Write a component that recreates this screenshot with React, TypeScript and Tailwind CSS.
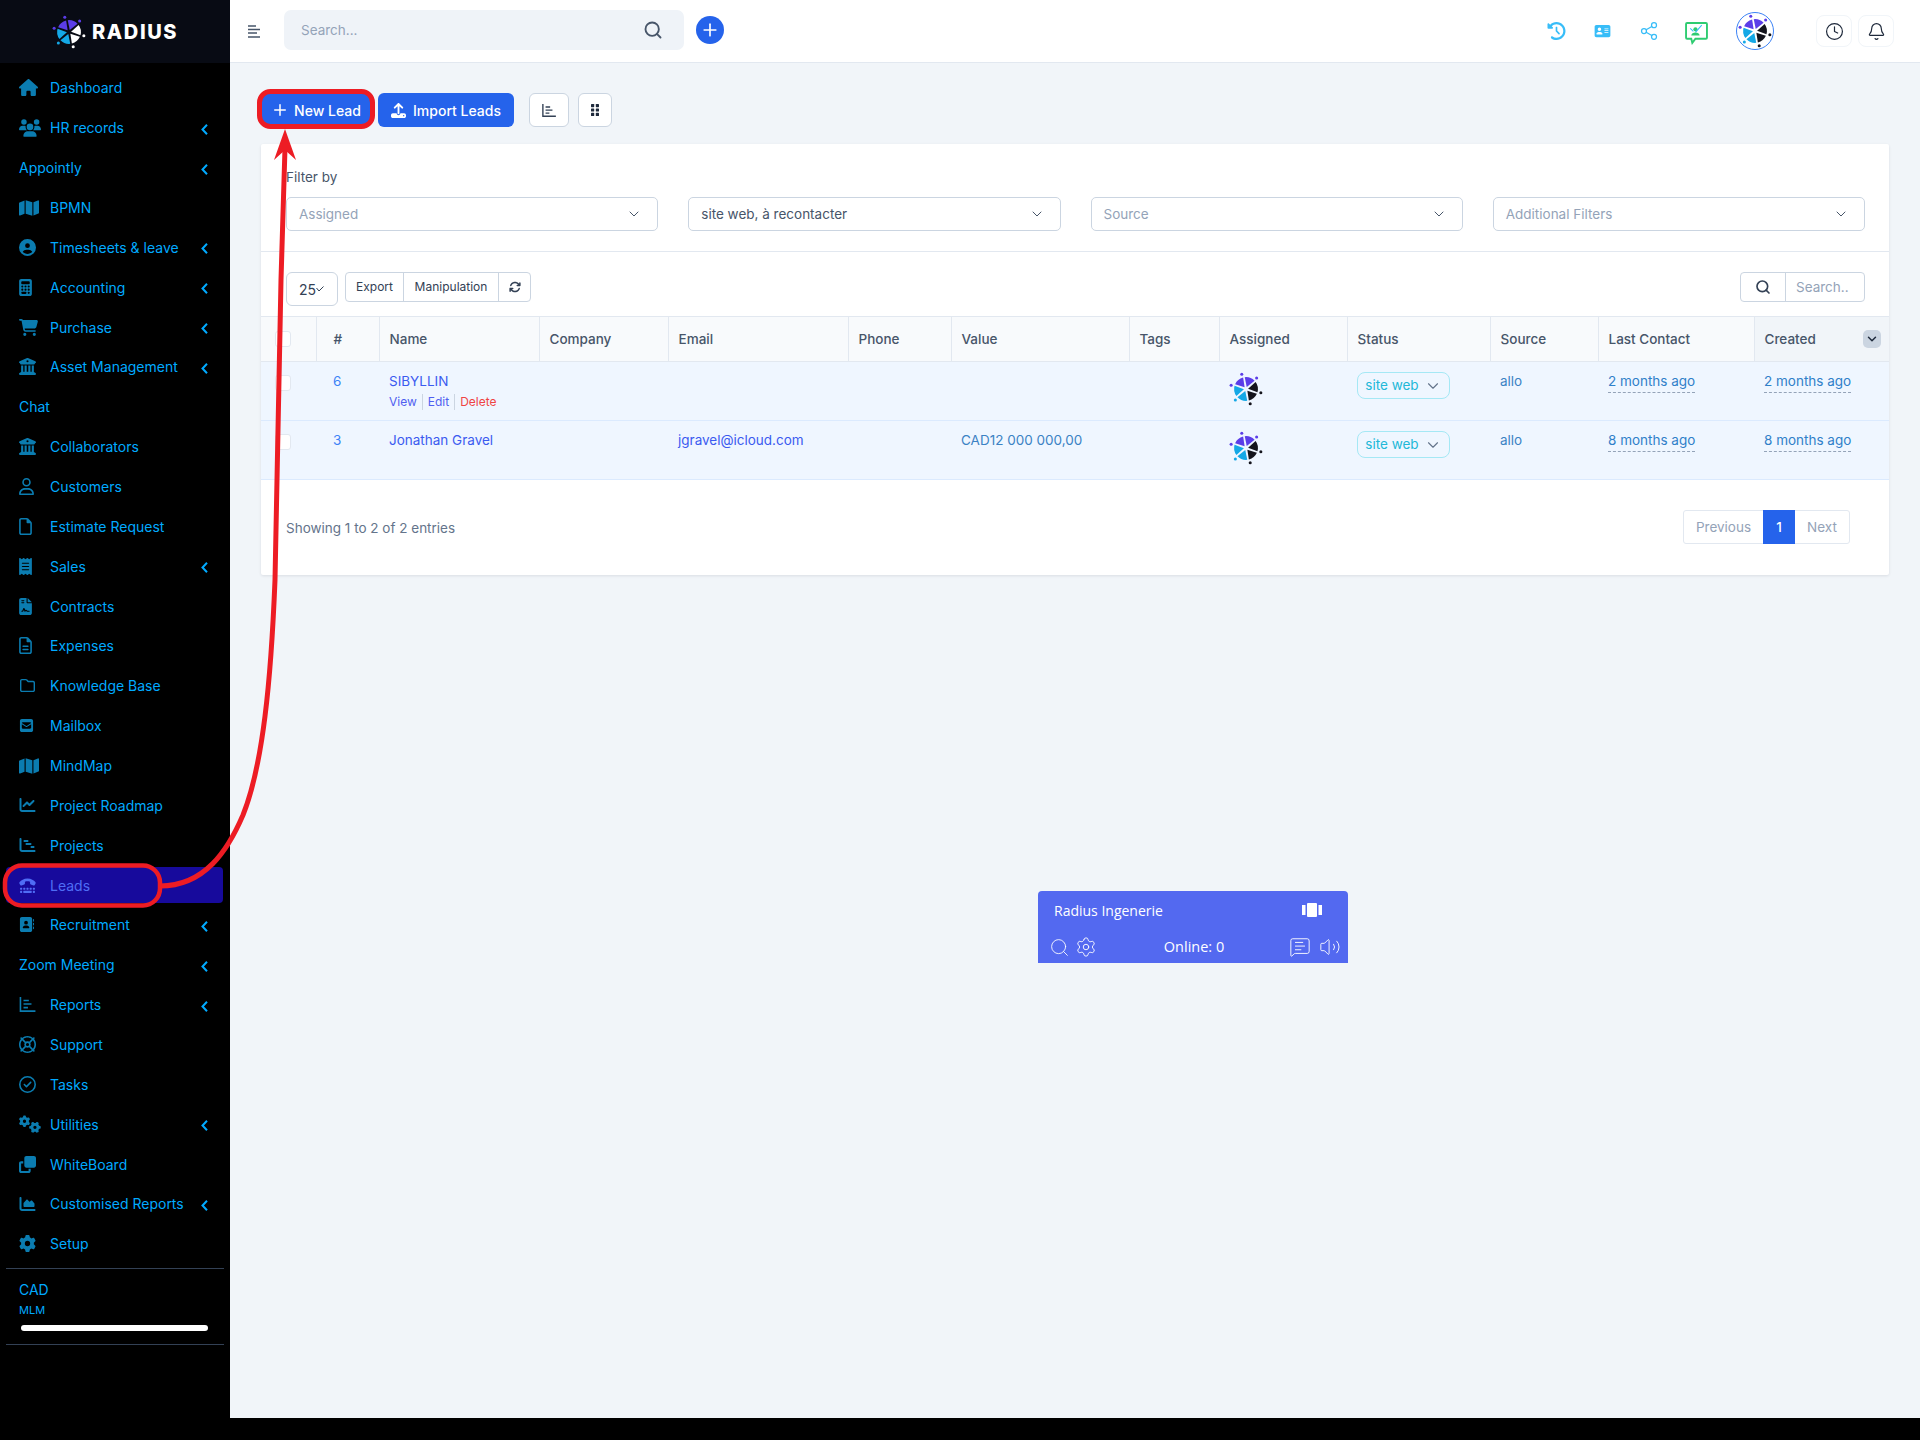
import React from "react";
import { ChevronDown, Search, Plus, Share2, Clock, Bell, Settings, MessageSquareText, Volume2 } from "lucide-react";
import {
  FaHouse, FaUsers, FaMap, FaCircleUser, FaCalculator, FaCartShopping, FaBuildingColumns, FaRegUser, FaRegFile,
  FaReceipt, FaFileContract, FaRegFileLines, FaRegFolder, FaSquareEnvelope, FaChartLine, FaChartGantt, FaTty,
  FaAddressBook, FaRegLifeRing, FaRegCircleCheck, FaGears, FaClone, FaChartArea, FaGear, FaClockRotateLeft,
  FaAddressCard, FaArrowsRotate, FaUpload,
} from "react-icons/fa6";

function ReportsIcon({ className }: { className?: string }) {
  return (
    <svg viewBox="0 0 18 17" className={className} fill="none" stroke="currentColor" strokeWidth="1.8">
      <path d="M1 0v16h17" />
      <path d="M4.5 4h6M4.5 8h9M4.5 12h5" />
    </svg>
  );
}

function Wheel({ size, right }: { size: number; right: string }) {
  const purple = "#5b3de8";
  const cyan = "#14a8e6";
  const colors = [purple, purple, right, right, cyan, cyan];
  const dots = [purple, purple, right, right, cyan, purple];
  const wedge = (a: number) => {
    const r = (d: number) => (d * Math.PI) / 180;
    const x1 = 2.5 * Math.cos(r(a));
    const y1 = 2.5 * Math.sin(r(a));
    const x2 = 14 * Math.cos(r(a - 26));
    const y2 = 14 * Math.sin(r(a - 26));
    const x3 = 14 * Math.cos(r(a + 26));
    const y3 = 14 * Math.sin(r(a + 26));
    return `M${x1} ${y1}L${x2} ${y2}A14 14 0 0 1 ${x3} ${y3}Z`;
  };
  return (
    <svg viewBox="-20 -20 40 40" width={size} height={size}>
      {colors.map((c, i) => (
        <path key={i} d={wedge(-130 + i * 60)} fill={c} />
      ))}
      {dots.map((c, i) => {
        const a = ((-106 + i * 60) * Math.PI) / 180;
        return <circle key={i} cx={18 * Math.cos(a)} cy={18 * Math.sin(a)} r="1.8" fill={c} />;
      })}
    </svg>
  );
}

const menu: { label: string; icon?: React.ComponentType<{ className?: string }>; size?: string; arrow?: boolean; active?: boolean }[] = [
  { label: "Dashboard", icon: FaHouse, size: "w-[19px] h-[17px]" },
  { label: "HR records", icon: FaUsers, size: "w-[22px] h-[18px]", arrow: true },
  { label: "Appointly", arrow: true },
  { label: "BPMN", icon: FaMap, size: "w-[20px] h-[18px]" },
  { label: "Timesheets & leave", icon: FaCircleUser, size: "w-[17px] h-[17px]", arrow: true },
  { label: "Accounting", icon: FaCalculator, size: "w-[13px] h-[17px]", arrow: true },
  { label: "Purchase", icon: FaCartShopping, size: "w-[19px] h-[17px]", arrow: true },
  { label: "Asset Management", icon: FaBuildingColumns, size: "w-[17px] h-[17px]", arrow: true },
  { label: "Chat" },
  { label: "Collaborators", icon: FaBuildingColumns, size: "w-[17px] h-[17px]" },
  { label: "Customers", icon: FaRegUser, size: "w-[15px] h-[17px]" },
  { label: "Estimate Request", icon: FaRegFile, size: "w-[13px] h-[17px]" },
  { label: "Sales", icon: FaReceipt, size: "w-[13px] h-[17px]", arrow: true },
  { label: "Contracts", icon: FaFileContract, size: "w-[13px] h-[17px]" },
  { label: "Expenses", icon: FaRegFileLines, size: "w-[13px] h-[17px]" },
  { label: "Knowledge Base", icon: FaRegFolder, size: "w-[17px] h-[15px]" },
  { label: "Mailbox", icon: FaSquareEnvelope, size: "w-[15px] h-[15px]" },
  { label: "MindMap", icon: FaMap, size: "w-[20px] h-[18px]" },
  { label: "Project Roadmap", icon: FaChartLine, size: "w-[17px] h-[16px]" },
  { label: "Projects", icon: FaChartGantt, size: "w-[17px] h-[16px]" },
  { label: "Leads", icon: FaTty, size: "w-[17px] h-[17px]", active: true },
  { label: "Recruitment", icon: FaAddressBook, size: "w-[15px] h-[17px]", arrow: true },
  { label: "Zoom Meeting", arrow: true },
  { label: "Reports", icon: ReportsIcon, size: "w-[17px] h-[15px]", arrow: true },
  { label: "Support", icon: FaRegLifeRing, size: "w-[17px] h-[17px]" },
  { label: "Tasks", icon: FaRegCircleCheck, size: "w-[17px] h-[17px]" },
  { label: "Utilities", icon: FaGears, size: "w-[22px] h-[18px]", arrow: true },
  { label: "WhiteBoard", icon: FaClone, size: "w-[17px] h-[17px]" },
  { label: "Customised Reports", icon: FaChartArea, size: "w-[17px] h-[16px]", arrow: true },
  { label: "Setup", icon: FaGear, size: "w-[17px] h-[17px]" },
];

function Sidebar() {
  return (
    <aside className="w-[230px] shrink-0 bg-black">
      <div className="h-[63px] bg-[#080b14] flex items-center pl-[52px] gap-[6px]">
        <Wheel size={34} right="#ffffff" />
        <span className="text-white text-[20px] font-extrabold tracking-[1.6px] leading-none">RADIUS</span>
      </div>
      <nav className="pt-[5px]">
        {menu.map((item) => (
          <div key={item.label} className="h-[39.86px] flex items-center ml-[6px] mr-[7px]">
            <div
              className={`w-full h-[36px] flex items-center pl-[13px] pr-[15px] rounded-[4px] text-[14px] ${
                item.active ? "bg-[#170a9c] text-[#4f6df5]" : "text-[#00aaff]"
              }`}
            >
              {item.icon && (
                <span className={`w-[31px] shrink-0 flex items-center ${item.active ? "text-[#4f6df5]" : "text-[#0b7cb0]"}`}>
                  <item.icon className={item.size} />
                </span>
              )}
              <span className="flex-1">{item.label}</span>
              {item.arrow && (
                <svg viewBox="0 0 7 11" className="w-[7px] h-[11px] mt-[3px]" fill="none" stroke="#00aaff" strokeWidth="2">
                  <path d="M6 .8 1.5 5.500 6 10.200" />
                </svg>
              )}
            </div>
          </div>
        ))}
      </nav>
      <div className="mt-[4px] mx-[6px] border-t border-b border-[#334155] h-[77px] px-[13px] pt-[11px] text-[#00aaff]">
        <div className="text-[14px] leading-[20px]">CAD</div>
        <div className="text-[11px] leading-[14px] mt-[3px]">MLM</div>
        <div className="h-[6px] bg-white rounded-full mt-[8px] ml-[2px] w-[187px]" />
      </div>
    </aside>
  );
}

function Header() {
  return (
    <header className="h-[63px] shrink-0 bg-white border-b border-[#e2e8f0] flex items-center">
      <svg viewBox="0 0 12 13" className="ml-[18px] w-[12px] h-[13px]" fill="none" stroke="#475569" strokeWidth="1.6">
        <path d="M0 1h8M0 4.500h12M0 8h9M0 12h12" />
      </svg>
      <div className="ml-[24px] -mt-[2px] w-[400px] h-[40px] rounded-[7px] bg-[#eff3f8] flex items-center justify-between pl-[17px] pr-[21px]">
        <span className="text-[13.5px] text-[#94a3b8]">Search...</span>
        <Search className="w-[20px] h-[20px] text-[#475569]" strokeWidth={2.25} />
      </div>
      <div className="ml-[12px] -mt-[2px] w-[28px] h-[28px] rounded-full bg-[#2563eb] flex items-center justify-center">
        <Plus className="w-[20px] h-[20px] text-white" strokeWidth={2} />
      </div>
      <div className="ml-auto flex items-center pr-[26px]">
        <FaClockRotateLeft className="w-[19px] h-[18px] text-[#38bdf8]" />
        <FaAddressCard className="ml-[28px] w-[17px] h-[14px] text-[#38bdf8]" />
        <Share2 className="ml-[28px] w-[20px] h-[20px] text-[#38bdf8]" strokeWidth={1.5} />
        <svg viewBox="0 0 22 22" className="ml-[26px] w-[23px] h-[23px] mt-[4px]" fill="none">
          <path d="M2 1h18a1 1 0 0 1 1 1v13a1 1 0 0 1-1 1H10l-3 4-1-4H2a1 1 0 0 1-1-1V2a1 1 0 0 1 1-1Z" stroke="#2ecc71" strokeWidth="1.8" />
          <circle cx="10" cy="7" r="2" fill="#2ecc71" />
          <path d="M6 13c0-2 2-3 4-3s4 1 4 3Z" fill="#2ecc71" />
          <path d="M5 6l3 3M10 10l6-7" stroke="#38bdf8" strokeWidth="1" />
        </svg>
        <div className="ml-[28px] w-[38px] h-[38px] rounded-full border border-[#3b82f6] flex items-center justify-center">
          <Wheel size={34} right="#14141c" />
        </div>
        <div className="ml-[42px] w-[36px] h-[32px] rounded-[8px] border border-[#f1f5f9] flex items-center justify-center">
          <Clock className="w-[19px] h-[19px] text-[#1e293b]" strokeWidth={1.5} />
        </div>
        <div className="ml-[6px] w-[36px] h-[32px] rounded-[8px] border border-[#f1f5f9] flex items-center justify-center">
          <Bell className="w-[19px] h-[19px] text-[#1e293b]" strokeWidth={1.5} />
        </div>
      </div>
    </header>
  );
}

function FilterSelect({ text, placeholder }: { text: string; placeholder?: boolean }) {
  return (
    <div className="flex-1 h-[34px] bg-white border border-[#cbd5e1] rounded-[5px] flex items-center justify-between pl-[12px] pr-[15px]">
      <span className={`text-[13.5px] ${placeholder ? "text-[#94a3b8]" : "text-[#475569]"}`}>{text}</span>
      <ChevronDown className="w-[16px] h-[16px] text-[#475569]" strokeWidth={1.5} />
    </div>
  );
}

const columns = [
  { label: "", w: "w-[55px]" },
  { label: "#", w: "w-[63px]" },
  { label: "Name", w: "w-[160px]" },
  { label: "Company", w: "w-[129px]" },
  { label: "Email", w: "w-[180px]" },
  { label: "Phone", w: "w-[103px]" },
  { label: "Value", w: "w-[178px]" },
  { label: "Tags", w: "w-[90px]" },
  { label: "Assigned", w: "w-[128px]" },
  { label: "Status", w: "w-[143px]" },
  { label: "Source", w: "w-[108px]" },
  { label: "Last Contact", w: "w-[156px]" },
  { label: "Created", w: "w-[135px]" },
];

function Checkbox() {
  return <div className="ml-[14px] w-[16px] h-[16px] bg-white border border-[#e2e8f0] rounded-[3px]" />;
}

function DateLink({ text }: { text: string }) {
  return <span className="text-[#2f80c9] border-b border-dashed border-[#94a3b8] pb-[3px]">{text}</span>;
}

function Row({ num, name, email, value, ago, actions }: { num: string; name: string; email?: string; value?: string; ago: string; actions?: boolean }) {
  const td = "align-top pt-[9px] px-[10px] leading-[20px]";
  return (
    <tr className="h-[59px] bg-[#eff6ff] border-b border-[#dbeafe]">
      <td className="align-top pt-[13px]"><Checkbox /></td>
      <td className={`${td} pl-[17px] text-[#3b82f6]`}>{num}</td>
      <td className={td}>
        <div className="text-[#3b5bf0]">{name}</div>
        {actions && (
          <div className="flex items-center text-[12px] leading-[16px] mt-[3px]">
            <span className="text-[#4f5ff0] pr-[5px] border-r border-[#cbd5e1]">View</span>
            <span className="text-[#4f5ff0] px-[5px] border-r border-[#cbd5e1]">Edit</span>
            <span className="text-[#ef4444] pl-[5px]">Delete</span>
          </div>
        )}
      </td>
      <td className={td} />
      <td className={`${td} text-[#3b5bf0]`}>{email}</td>
      <td className={td} />
      <td className={`${td} text-[#3b82c4]`}>{value}</td>
      <td className={td} />
      <td className="align-top pt-[10px] pl-[10px]"><Wheel size={34} right="#14141c" /></td>
      <td className="align-top pt-[10px] px-[10px]">
        <div className="w-[93px] h-[27px] rounded-[8px] border border-[#a5e8f5] flex items-center justify-center gap-[5px] text-[13.5px] text-[#22b8d8]">
          site web
          <ChevronDown className="w-[18px] h-[18px] text-[#64748b]" strokeWidth={1.5} />
        </div>
      </td>
      <td className={`${td} text-[#3b82c4]`}>allo</td>
      <td className={td}><DateLink text={ago} /></td>
      <td className={td}><DateLink text={ago} /></td>
    </tr>
  );
}

function LeadsCard() {
  return (
    <section className="bg-white shadow-[0_1px_3px_rgba(15,23,42,0.1)] rounded-[2px]">
      <div className="pl-[25px] pr-[24px] pt-[23px] pb-[20px] border-b border-[#e2e8f0]">
        <div className="text-[13.5px] leading-[20px] text-[#475569]">Filter by</div>
        <div className="mt-[10px] flex gap-[30px]">
          <FilterSelect text="Assigned" placeholder />
          <FilterSelect text="site web, à recontacter" />
          <FilterSelect text="Source" placeholder />
          <FilterSelect text="Additional Filters" placeholder />
        </div>
      </div>
      <div className="pl-[25px] pr-[24px] pt-[20px] pb-[10px] flex items-start">
        <div className="w-[52px] h-[34px] border border-[#cbd5e1] rounded-[6px] flex items-center pl-[12px] text-[14px] text-[#334155]">
          25
          <svg viewBox="0 0 8 6" className="w-[8px] h-[6px]" fill="none" stroke="#334155"><path d="M.5 2l2.500 3 4.500-4.500" /></svg>
        </div>
        <div className="ml-[7px] h-[30px] border border-[#cbd5e1] rounded-[4px] flex items-center text-[12px] text-[#334155]">
          <span className="w-[58px] h-full flex items-center justify-center border-r border-[#cbd5e1]">Export</span>
          <span className="w-[95px] h-full flex items-center justify-center border-r border-[#cbd5e1]">Manipulation</span>
          <span className="w-[31px] h-full flex items-center justify-center"><FaArrowsRotate className="w-[12px] h-[12px]" /></span>
        </div>
        <div className="ml-auto w-[125px] h-[30px] border border-[#cbd5e1] rounded-[4px] flex items-center">
          <span className="w-[45px] h-full flex items-center justify-center border-r border-[#cbd5e1]">
            <Search className="w-[16px] h-[16px] text-[#334155]" strokeWidth={2.5} />
          </span>
          <span className="pl-[10px] text-[13.5px] text-[#94a3b8]">Search..</span>
        </div>
      </div>
      <table className="w-full table-fixed text-[13.5px] border-collapse">
        <colgroup>
          {columns.map((c) => <col key={c.label} className={c.w} />)}
        </colgroup>
        <thead>
          <tr className="h-[45px] border-y border-[#e2e8f0]">
            {columns.map((c, i) => (
              <th
                key={c.label}
                className={`text-left font-medium text-[#475569] border-r border-[#e2e8f0] last:border-r-0 ${i === 12 ? "bg-[#f1f5f9]" : "bg-[#f8fafc]"} ${i === 0 ? "" : i === 1 ? "pl-[17px]" : "px-[10px]"}`}
              >
                {i === 0 ? (
                  <Checkbox />
                ) : i === 12 ? (
                  <div className="flex items-center justify-between">
                    {c.label}
                    <span className="w-[18px] h-[18px] -mr-[2px] rounded-[5px] bg-[#cbd5e1] flex items-center justify-center">
                      <ChevronDown className="w-[14px] h-[14px] text-[#1e293b]" strokeWidth={2.5} />
                    </span>
                  </div>
                ) : (
                  c.label
                )}
              </th>
            ))}
          </tr>
        </thead>
        <tbody>
          <Row num="6" name="SIBYLLIN" ago="2 months ago" actions />
          <Row num="3" name="Jonathan Gravel" email="jgravel@icloud.com" value="CAD12 000 000,00" ago="8 months ago" />
        </tbody>
      </table>
      <div className="pt-[30px] pb-[31px] pl-[25px] pr-[39px] flex items-center justify-between">
        <span className="text-[13.5px] text-[#64748b] mt-[2px]">Showing 1 to 2 of 2 entries</span>
        <div className="h-[34px] border border-[#e2e8f0] rounded-[3px] flex items-center text-[13.5px] text-[#94a3b8]">
          <span className="w-[79px] text-center">Previous</span>
          <span className="w-[32px] h-[34px] bg-[#2563eb] text-white font-medium flex items-center justify-center">1</span>
          <span className="w-[54px] text-center">Next</span>
        </div>
      </div>
    </section>
  );
}

function ChatWidget() {
  return (
    <div className="absolute left-[1038px] top-[891px] w-[310px] h-[72px] bg-[#5369f0] rounded-t-[4px] text-white font-['Open_Sans',sans-serif]">
      <div className="flex items-center justify-between pl-[16px] pr-[26px] h-[38px]">
        <span className="text-[14px]">Radius Ingenerie</span>
        <svg viewBox="0 0 20 14" className="w-[20px] h-[14px]" fill="#ffffff">
          <rect x="0" y="2" width="3.500" height="10" />
          <rect x="5" y="0" width="10" height="14" rx="1" />
          <rect x="16.500" y="2" width="3.500" height="10" />
        </svg>
      </div>
      <div className="flex items-center pl-[11px] pr-[7px] mt-[7px]">
        <Search className="w-[21px] h-[21px]" strokeWidth={1} />
        <Settings className="ml-[5px] w-[22px] h-[22px]" strokeWidth={1} />
        <span className="flex-1 text-center text-[14.5px] pl-[2px]">Online: 0</span>
        <MessageSquareText className="w-[22px] h-[22px]" strokeWidth={1} />
        <Volume2 className="ml-[8px] w-[22px] h-[22px]" strokeWidth={1} />
      </div>
    </div>
  );
}

function Annotations() {
  return (
    <svg className="absolute inset-0 w-[1920px] h-[1440px] pointer-events-none" viewBox="0 0 1920 1440" fill="none">
      <rect x="5" y="865.500" width="155" height="40" rx="17" stroke="#ed1c24" strokeWidth="4.500" />
      <rect x="259.500" y="91.500" width="113" height="35" rx="11" stroke="#ed1c24" strokeWidth="5" />
      <path d="M160 886C205 886 228 850 243 815C263 765 271 680 275 580L281 280L285 148" stroke="#ed1c24" strokeWidth="5" />
      <path d="M285 129L296 160L285 150L274 160Z" fill="#ed1c24" />
    </svg>
  );
}

export default function App() {
  return (
    <div className="relative w-[1920px] h-[1440px] bg-black flex overflow-hidden font-[Inter,sans-serif]">
      <Sidebar />
      <div className="flex-1 h-[1418px] bg-[#f1f5f9] flex flex-col">
        <Header />
        <main className="px-[31px] pt-[30px]">
          <div className="flex items-center mb-[17px]">
            <button className="w-[110px] h-[34px] rounded-[6px] bg-[#2563eb] text-white text-[14px] font-medium flex items-center justify-center gap-[5px]">
              <Plus className="w-[18px] h-[18px]" strokeWidth={2} />
              New Lead
            </button>
            <button className="ml-[7px] w-[136px] h-[34px] rounded-[6px] bg-[#2563eb] text-white text-[14px] font-medium flex items-center justify-center gap-[7px]">
              <FaUpload className="w-[15px] h-[15px]" />
              Import Leads
            </button>
            <button className="ml-[15px] w-[40px] h-[34px] rounded-[6px] bg-white border border-[#cbd5e1] flex items-center justify-center">
              <ReportsIcon className="w-[14px] h-[13px] text-[#334155]" />
            </button>
            <button className="ml-[9px] w-[34px] h-[34px] rounded-[6px] bg-white border border-[#cbd5e1] flex items-center justify-center">
              <svg viewBox="0 0 8 12" className="w-[8px] h-[12px]" fill="#1e293b">
                <rect x="0" y="0" width="3.200" height="3.200" rx=".6" />
                <rect x="4.800" y="0" width="3.200" height="3.200" rx=".6" />
                <rect x="0" y="4.400" width="3.200" height="3.200" rx=".6" />
                <rect x="4.800" y="4.400" width="3.200" height="3.200" rx=".6" />
                <rect x="0" y="8.800" width="3.200" height="3.200" rx=".6" />
                <rect x="4.800" y="8.800" width="3.200" height="3.200" rx=".6" />
              </svg>
            </button>
          </div>
          <LeadsCard />
        </main>
      </div>
      <ChatWidget />
      <Annotations />
    </div>
  );
}
